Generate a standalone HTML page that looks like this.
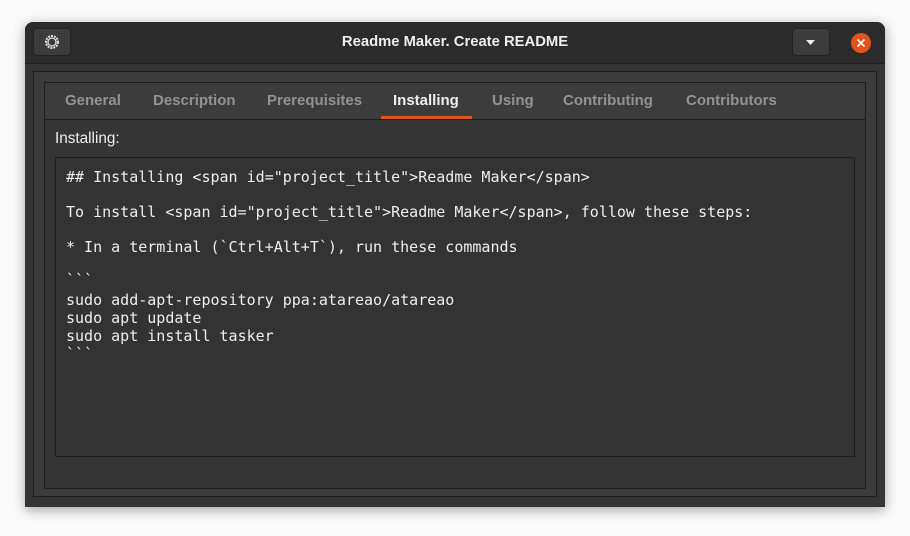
<!DOCTYPE html>
<html><head><meta charset="utf-8"><style>
body{margin:0;width:910px;height:536px;background:#fafafa;position:relative;overflow:hidden;font-family:"Liberation Sans","DejaVu Sans",sans-serif}
.win{position:absolute;left:25px;top:22px;width:860px;height:485px;background:#353535;border-radius:8px 8px 0 0;box-shadow:0 3px 12px rgba(0,0,0,.35);overflow:hidden}
.tb{position:absolute;left:0;top:0;width:860px;height:41px;background:#2b2b2b;border-bottom:1px solid #1f1f1f}
.title{position:absolute;left:0;right:0;top:12px;text-align:center;color:#eee;font-weight:bold;font-size:14.8px}
.btn{position:absolute;top:6px;width:38px;height:28px;background:#3c3c3c;border:1px solid #232323;border-radius:4px;box-sizing:border-box}
.close{position:absolute;left:826px;top:11px;width:20px;height:20px;border-radius:50%;background:#e2521d}
.frame{position:absolute;left:8px;top:49px;width:844px;height:426px;border:1px solid #1e1e1e;background:#3c3c3c;box-sizing:border-box}
.nb{position:absolute;left:19px;top:60px;width:822px;height:407px;border:1px solid #1e1e1e;background:#353535;box-sizing:border-box}
.tabs{position:absolute;left:0;top:0;width:820px;height:36px;background:#3c3c3c;border-bottom:1px solid #1e1e1e}
.tab{position:absolute;top:9px;font-size:15px;font-weight:bold;color:#929292}
.lbl{position:absolute;left:10px;top:47px;color:#eee;font-size:15.3px}
.tv{position:absolute;left:10px;top:74px;width:800px;height:300px;border:1px solid #1e1e1e;background:#333;box-sizing:border-box}
.l{position:absolute;left:10px;font-family:"DejaVu Sans Mono","Liberation Mono",monospace;font-size:15px;color:#eee;white-space:pre;line-height:18px}
</style></head><body>
<div class="win">
 <div class="tb">
  <div class="btn" style="left:8px"><svg width="36" height="26" viewBox="0 0 36 26"><circle cx="18" cy="13" r="6" fill="none" stroke="#ddd" stroke-width="2" stroke-dasharray="2 1"/><circle cx="18" cy="13" r="4" fill="none" stroke="#ddd" stroke-width="1.3"/></svg></div>
  <div class="title">Readme Maker. Create README</div>
  <div class="btn" style="left:767px"><svg width="36" height="26" viewBox="0 0 36 26"><path d="M13 11h9l-4.5 5z" fill="#eee"/></svg></div>
  <div class="close"><svg width="20" height="20"><path d="M6.5 6.5l7 7M13.5 6.5l-7 7" stroke="#fff" stroke-width="1.6"/></svg></div>
 </div>
 <div class="frame"></div>
 <div class="nb">
  <div class="tabs">
   <span class="tab" style="left:20px">General</span>
   <span class="tab" style="left:108px">Description</span>
   <span class="tab" style="left:222px">Prerequisites</span>
   <span class="tab" style="left:348px;color:#eee">Installing</span>
   <div style="position:absolute;left:336px;top:33px;width:91px;height:3px;background:#e2521d"></div>
   <span class="tab" style="left:447px">Using</span>
   <span class="tab" style="left:518px">Contributing</span>
   <span class="tab" style="left:641px">Contributors</span>
  </div>
  <div class="lbl">Installing:</div>
  <div class="tv">
   <div class="l" style="top:10px">## Installing &lt;span id="project_title"&gt;Readme Maker&lt;/span&gt;</div>
   <div class="l" style="top:45px">To install &lt;span id="project_title"&gt;Readme Maker&lt;/span&gt;, follow these steps:</div>
   <div class="l" style="top:80px">* In a terminal (&#96;Ctrl+Alt+T&#96;), run these commands</div>
   <div class="l" style="top:113px">&#96;&#96;&#96;</div>
   <div class="l" style="top:133px">sudo add-apt-repository ppa:atareao/atareao</div>
   <div class="l" style="top:151px">sudo apt update</div>
   <div class="l" style="top:169px">sudo apt install tasker</div>
   <div class="l" style="top:187px">&#96;&#96;&#96;</div>
  </div>
 </div>
</div>
</body></html>
